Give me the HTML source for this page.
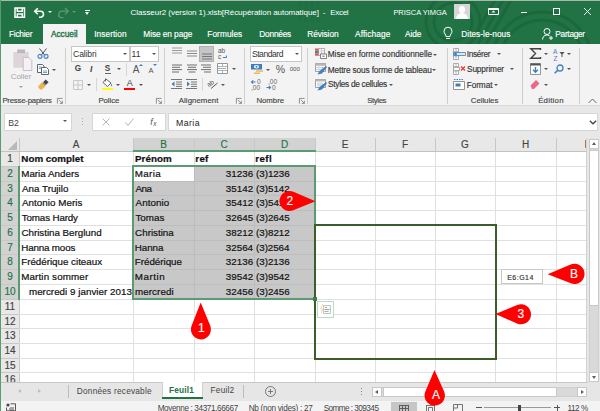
<!DOCTYPE html>
<html><head><meta charset="utf-8">
<style>
*{margin:0;padding:0;box-sizing:border-box}
html,body{width:600px;height:411px;overflow:hidden;background:#fff;font-family:"Liberation Sans",sans-serif}
.a{position:absolute}
.t{position:absolute;white-space:nowrap;line-height:1}
.c{-webkit-text-stroke:0.2px currentColor}
.c1{-webkit-text-stroke:0.15px currentColor}
.c2{-webkit-text-stroke:0.35px currentColor}
svg{position:absolute;overflow:visible}
.tab{position:absolute;white-space:nowrap;line-height:1;font-size:8.5px;color:#fff;top:31px}
.gl{position:absolute;white-space:nowrap;line-height:1;font-size:8px;color:#444;top:96px}
.sep{position:absolute;width:1px;background:#d6d6d6;top:48px;height:56px}
.rt{position:absolute;font-size:9px;color:#262626;white-space:nowrap;line-height:1}
.dd{position:absolute;width:0;height:0;border-left:2px solid transparent;border-right:2px solid transparent;border-top:2px solid #555}
</style></head><body>
<div class="a" style="left:0;top:0;width:600px;height:44px;background:#217346"></div>
<svg style="left:280px;top:0" width="320" height="44" viewBox="0 0 320 44"><g fill="none" stroke="#1c683d" stroke-width="3"><circle cx="173" cy="22" r="19"/><circle cx="173" cy="22" r="27"/><path d="M190 44L215 0M198 44L223 0M206 44L231 0"/><circle cx="262" cy="62" r="42"/><circle cx="262" cy="62" r="50"/><path d="M20 0v22M26 0v22M32 0v22M38 0v22" stroke="#1f6f43"/></g></svg>
<div class="a" style="left:0;top:0;width:600px;height:1px;background:#a8b8ac"></div>
<!-- QAT -->
<svg style="left:14px;top:7px" width="12" height="11" viewBox="0 0 12 11"><g fill="none" stroke="#fff" stroke-width="1.5"><path d="M1 .9h9.5v9.3H1z"/><path d="M3.3 .9v3.3h5V.9"/><path d="M3.3 10.2V7h5v3.2"/></g></svg>
<svg style="left:33px;top:7px" width="13" height="11" viewBox="0 0 13 11"><g fill="none" stroke="#fff" stroke-width="1.6"><path d="M1.8 4.2h5.7a3 3 0 0 1 0 6H6"/><path d="M4.8 1.2L1.8 4.2l3 3"/></g></svg>
<div class="a" style="left:48px;top:11px;border-left:2px solid transparent;border-right:2px solid transparent;border-top:2.5px solid #fff"></div>
<svg style="left:57px;top:7px" width="13" height="11" viewBox="0 0 13 11"><g fill="none" stroke="#5e9a77" stroke-width="1.3"><path d="M11 4.2H5a3.2 3.2 0 0 0 0 6.4h1.5"/><path d="M8 1l3.2 3.2L8 7.4"/></g></svg>
<div class="a" style="left:72px;top:11px;border-left:2px solid transparent;border-right:2px solid transparent;border-top:2.5px solid #5e9a77"></div>
<div class="a" style="left:85px;top:10px;width:5px;height:1px;background:#fff"></div>
<div class="a" style="left:85px;top:12px;border-left:2.5px solid transparent;border-right:2.5px solid transparent;border-top:3px solid #fff"></div>
<!-- title -->
<div class="a" style="left:454px;top:4px;width:16px;height:15px;background:#d6d6d6;overflow:hidden"><div class="a" style="left:5px;top:2px;width:6px;height:7px;border-radius:3px;background:#fff"></div><div class="a" style="left:2px;top:9px;width:12px;height:9px;border-radius:6px 6px 0 0;background:#fff"></div></div>
<svg style="left:488px;top:8px" width="11" height="7" viewBox="0 0 11 7"><path d="M.5 .5h10v6h-10z" fill="none" stroke="#fff" stroke-width="1"/><path d="M3.5 4.5l2-2 2 2z" fill="#fff"/><path d="M.5 1.5h10" stroke="#fff" stroke-width="1"/></svg>
<div class="a" style="left:521px;top:12px;width:6px;height:1px;background:#fff"></div>
<div class="a" style="left:553px;top:8px;width:7px;height:7px;border:1px solid #fff"></div>
<svg style="left:584px;top:8px" width="7" height="7" viewBox="0 0 7 7"><path d="M0 0l7 7M7 0L0 7" stroke="#fff" stroke-width="0.9"/></svg>
<!-- tabs -->
<div class="a" style="left:43px;top:24px;width:43px;height:21px;background:#f3f3f3"></div>
<svg style="left:443px;top:27px" width="10" height="13" viewBox="0 0 10 13"><g fill="none" stroke="#fff" stroke-width="1"><path d="M3 9.5C3 7.5 1 6.5 1 4.2a4 4 0 0 1 8 0C9 6.5 7 7.5 7 9.5z"/><path d="M3.2 11.5h3.6"/></g></svg>
<svg style="left:542px;top:28px" width="12" height="12" viewBox="0 0 12 12"><g fill="none" stroke="#fff" stroke-width="1"><circle cx="5" cy="3.5" r="3"/><path d="M.5 11.5a4.5 4.5 0 0 1 7-3.8"/><path d="M9 8v4M7 10h4"/></g></svg>

<div class="t" style="left:130.60px;top:8.83px;font-size:8.0px;color:#fff;letter-spacing:-0.047px">Classeur2 (version 1).xlsb[Récupération automatique]</div>
<div class="t" style="left:322.64px;top:8.83px;font-size:8.0px;color:#fff">-</div>
<div class="t" style="left:330.36px;top:8.83px;font-size:8.0px;color:#fff;letter-spacing:-0.350px">Excel</div>
<div class="t" style="left:393.40px;top:9.25px;font-size:7.5px;color:#fff;letter-spacing:-0.030px">PRISCA YIMGA</div>
<div class="t c1" style="left:9.04px;top:29.67px;font-size:8.3px;color:#fff;letter-spacing:-0.252px">Fichier</div>
<div class="t c2" style="left:51.00px;top:29.67px;font-size:8.3px;color:#217346;letter-spacing:-0.031px">Accueil</div>
<div class="t c1" style="left:94.25px;top:29.67px;font-size:8.3px;color:#fff;letter-spacing:0.057px">Insertion</div>
<div class="t c1" style="left:143.34px;top:29.67px;font-size:8.3px;color:#fff;letter-spacing:-0.073px">Mise en page</div>
<div class="t c1" style="left:207.34px;top:29.67px;font-size:8.3px;color:#fff;letter-spacing:0.049px">Formules</div>
<div class="t c1" style="left:259.34px;top:29.67px;font-size:8.3px;color:#fff;letter-spacing:-0.214px">Données</div>
<div class="t c1" style="left:307.34px;top:29.67px;font-size:8.3px;color:#fff;letter-spacing:-0.090px">Révision</div>
<div class="t c1" style="left:355.00px;top:29.67px;font-size:8.3px;color:#fff;letter-spacing:0.116px">Affichage</div>
<div class="t c1" style="left:405.00px;top:29.67px;font-size:8.3px;color:#fff;letter-spacing:-0.076px">Aide</div>
<div class="t c1" style="left:461.34px;top:29.67px;font-size:8.3px;color:#fff;letter-spacing:0.006px">Dites-le-nous</div>
<div class="t c1" style="left:555.34px;top:29.67px;font-size:8.3px;color:#fff;letter-spacing:-0.292px">Partager</div>
<div class="a" style="left:0;top:44px;width:600px;height:62px;background:#f3f3f3"></div>
<div class="a" style="left:0;top:105px;width:600px;height:1px;background:#dadada"></div>
<div class="a" style="left:0;top:106px;width:600px;height:32px;background:#e8e8e8"></div>
<!-- separators -->
<div class="a" style="left:65px;top:48px;width:1px;height:56px;background:#cdcdcd"></div>
<div class="a" style="left:164px;top:48px;width:1px;height:56px;background:#cdcdcd"></div>
<div class="a" style="left:244px;top:48px;width:1px;height:56px;background:#cdcdcd"></div>
<div class="a" style="left:307px;top:48px;width:1px;height:56px;background:#cdcdcd"></div>
<div class="a" style="left:447px;top:48px;width:1px;height:56px;background:#cdcdcd"></div>
<div class="a" style="left:522px;top:48px;width:1px;height:56px;background:#cdcdcd"></div>
<div class="a" style="left:579px;top:48px;width:1px;height:56px;background:#cdcdcd"></div>
<!-- small seps -->
<div class="a" style="left:126px;top:63px;width:1px;height:13px;background:#d6d6d6"></div>
<div class="a" style="left:96px;top:78px;width:1px;height:13px;background:#d6d6d6"></div>
<div class="a" style="left:202px;top:78px;width:1px;height:13px;background:#d6d6d6"></div>

<!-- Clipboard -->
<svg style="left:13px;top:49px" width="20" height="22" viewBox="0 0 20 22"><path d="M.3 3h15.4v15.7H.3z" fill="#dcd6d9"/><path d="M4.2 .5h7.8v3.6H4.2z" fill="#bdb5b9"/><path d="M10.2 8.4h5.6l3 3v10.1h-8.6z" fill="#f6f0f6" stroke="#bbb3b9" stroke-width=".8"/></svg>
<div class="dd" style="left:19px;top:86px;border-top-color:#a0a0a0"></div>
<svg style="left:37px;top:48px" width="12" height="11" viewBox="0 0 12 11"><g fill="none" stroke="#4e4e4e" stroke-width="1"><path d="M2.5 .5l5.5 7M9.5 .5L4 7.5"/></g><g fill="none" stroke="#4a88c8" stroke-width="1.2"><circle cx="3" cy="8.3" r="2"/><circle cx="9" cy="8.3" r="2"/></g></svg>
<svg style="left:37px;top:64px" width="12" height="11" viewBox="0 0 12 11"><path d="M.5 .5h5l1.5 1.5v6.5H.5z" fill="#fff" stroke="#555" stroke-width=".9"/><path d="M4.5 3.5h5l2 2v5h-7z" fill="#fff" stroke="#555" stroke-width=".9"/><path d="M6 7h4M6 8.5h4" stroke="#4a88c8" stroke-width=".8"/><path d="M1.8 3h3M1.8 4.5h2" stroke="#4a88c8" stroke-width=".8"/></svg>
<div class="dd" style="left:52px;top:69px"></div>
<svg style="left:38px;top:79px" width="11" height="11" viewBox="0 0 11 11"><path d="M3.8 3.6l3.6 3.6-3.4 3.4H2.2L.4 8.8V7z" fill="#f0b24a"/><path d="M5.2 3l2.6-2.6 2.8 2.8L8 5.8z" fill="#444"/><path d="M4.3 4l1-1 2.8 2.8-1 1z" fill="#777"/></svg>

<!-- Font -->
<div class="a" style="left:71px;top:46px;width:59px;height:16px;background:#fff;border:1px solid #c6c6c6"></div>
<div class="a" style="left:130px;top:46px;width:29px;height:16px;background:#fff;border:1px solid #c6c6c6"></div>
<div class="dd" style="left:123px;top:53px;border-left-width:2.5px;border-right-width:2.5px;border-top-width:2.5px"></div>
<div class="dd" style="left:152px;top:53px;border-left-width:2.5px;border-right-width:2.5px;border-top-width:2.5px"></div>
<div class="dd" style="left:117px;top:68px;border-left-width:2.5px;border-right-width:2.5px;border-top-width:2.5px"></div>
<div class="a" style="left:105px;top:73px;width:6px;height:1px;background:#666"></div>
<div class="a" style="left:139px;top:64px;border-left:2px solid transparent;border-right:2px solid transparent;border-bottom:2px solid #3f7fc0"></div>
<div class="a" style="left:153px;top:64px;border-left:2px solid transparent;border-right:2px solid transparent;border-top:2px solid #3f7fc0"></div>
<svg style="left:73px;top:80px" width="10" height="10" viewBox="0 0 10 10"><g fill="none" stroke="#c8c8c8" stroke-width="1"><path d="M.5 .5h9v9h-9zM5 .5v9M.5 5h9"/></g></svg>
<div class="dd" style="left:87px;top:84px;border-left-width:2.5px;border-right-width:2.5px;border-top-width:2.5px"></div>
<svg style="left:102px;top:78px" width="12" height="10" viewBox="0 0 12 10"><path d="M4 1l5 4-3.5 3.5-4.5-4z" fill="#fff" stroke="#555" stroke-width=".9"/><path d="M9.5 5.5q1.5 2 0 3q-1.2-1 0-3z" fill="#3f7fc0"/><path d="M3.5 .5v3" stroke="#555" stroke-width=".9"/></svg>
<div class="a" style="left:102px;top:88px;width:11px;height:2px;background:#ffff00"></div>
<div class="dd" style="left:116px;top:84px;border-left-width:2.5px;border-right-width:2.5px;border-top-width:2.5px"></div>
<div class="a" style="left:124px;top:88px;width:11px;height:2px;background:#ff0000"></div>
<div class="dd" style="left:139px;top:84px;border-left-width:2.5px;border-right-width:2.5px;border-top-width:2.5px"></div>
<svg style="left:156px;top:98px" width="6" height="6" viewBox="0 0 6 6"><g fill="none" stroke="#777" stroke-width=".8"><path d="M.4 5.6V.4h5.2"/><path d="M1.8 1.8l3.5 3.5M5.4 2.8v2.6H2.8"/></g></svg>
<svg style="left:57px;top:98px" width="6" height="6" viewBox="0 0 6 6"><g fill="none" stroke="#777" stroke-width=".8"><path d="M.4 5.6V.4h5.2"/><path d="M1.8 1.8l3.5 3.5M5.4 2.8v2.6H2.8"/></g></svg>
<svg style="left:236px;top:98px" width="6" height="6" viewBox="0 0 6 6"><g fill="none" stroke="#777" stroke-width=".8"><path d="M.4 5.6V.4h5.2"/><path d="M1.8 1.8l3.5 3.5M5.4 2.8v2.6H2.8"/></g></svg>
<svg style="left:299px;top:98px" width="6" height="6" viewBox="0 0 6 6"><g fill="none" stroke="#777" stroke-width=".8"><path d="M.4 5.6V.4h5.2"/><path d="M1.8 1.8l3.5 3.5M5.4 2.8v2.6H2.8"/></g></svg>

<!-- Alignment -->
<svg style="left:172px;top:47px" width="10" height="7" viewBox="0 0 10 7"><path d="M0 1h10M0 3.5h10M0 6h10" stroke="#9a9a9a" stroke-width="1"/></svg>
<svg style="left:187px;top:50px" width="10" height="7" viewBox="0 0 10 7"><path d="M0 1h10M0 3.5h10M0 6h10" stroke="#8a8a8a" stroke-width="1"/></svg>
<div class="a" style="left:199px;top:46px;width:15px;height:16px;background:#c6c6c6;border:1px solid #b0b0b0"></div>
<svg style="left:202px;top:53px" width="10" height="7" viewBox="0 0 10 7"><path d="M0 1h10M0 3.5h10M0 6h10" stroke="#777" stroke-width="1"/></svg>
<svg style="left:172px;top:64px" width="10" height="9" viewBox="0 0 10 9"><path d="M0 1h10M0 3.3h8M0 5.6h10M0 8h7" stroke="#707070" stroke-width="1"/></svg>
<svg style="left:187px;top:64px" width="10" height="9" viewBox="0 0 10 9"><path d="M0 1h10M1 3.3h8M0 5.6h10M1.5 8h7" stroke="#707070" stroke-width="1"/></svg>
<svg style="left:201px;top:64px" width="10" height="9" viewBox="0 0 10 9"><path d="M0 1h10M2 3.3h8M0 5.6h10M3 8h7" stroke="#707070" stroke-width="1"/></svg>
<svg style="left:218px;top:48px" width="10" height="11" viewBox="0 0 10 11"><text x="0" y="5" font-family="Liberation Sans" font-size="6.5" fill="#555">ab</text><text x="0" y="10.5" font-family="Liberation Sans" font-size="6.5" fill="#555">c</text><path d="M5 9.5h3.5v-2" fill="none" stroke="#3f7fc0" stroke-width="1"/></svg>
<svg style="left:217px;top:63px" width="11" height="11" viewBox="0 0 11 11"><path d="M.5 .5h10v10h-10z" fill="#fff" stroke="#8a8a8a" stroke-width=".9"/><path d="M.5 3.5h10M.5 7.5h10M5.5 .5v3M5.5 7.5v3" stroke="#a0a0a0" stroke-width=".8"/><path d="M1.5 5.5h8" stroke="#3f7fc0" stroke-width="1" stroke-dasharray="1.2 .8"/></svg>
<div class="dd" style="left:232px;top:68px;border-left-width:2.5px;border-right-width:2.5px;border-top-width:2.5px"></div>
<svg style="left:171px;top:79px" width="11" height="10" viewBox="0 0 11 10"><path d="M0 .5h11M5 3h6M5 5.2h6M5 7.4h6M0 9.5h11" stroke="#777" stroke-width="1"/><path d="M.5 5l3-2.5v5z" fill="#3f7fc0"/></svg>
<svg style="left:186px;top:79px" width="11" height="10" viewBox="0 0 11 10"><path d="M0 .5h11M5 3h6M5 5.2h6M5 7.4h6M0 9.5h11" stroke="#777" stroke-width="1"/><path d="M4 5l-3-2.5v5z" fill="#3f7fc0"/></svg>
<svg style="left:207px;top:79px" width="12" height="10" viewBox="0 0 12 10"><text x="0" y="7" font-family="Liberation Sans" font-size="6.5" fill="#555" transform="rotate(-35 3 5)">ab</text><path d="M4 9.5l6.5-5.5" stroke="#555" stroke-width="1"/></svg>
<div class="dd" style="left:221px;top:84px;border-left-width:2.5px;border-right-width:2.5px;border-top-width:2.5px"></div>

<!-- Number -->
<div class="a" style="left:250px;top:46px;width:52px;height:16px;background:#fff;border:1px solid #c6c6c6"></div>
<div class="dd" style="left:295px;top:53px;border-left-width:2.5px;border-right-width:2.5px;border-top-width:2.5px"></div>
<svg style="left:251px;top:64px" width="13" height="10" viewBox="0 0 13 10"><path d="M0 0h11v5.5H0z" fill="#3f7fc0"/><ellipse cx="5.5" cy="2.75" rx="2.6" ry="1.7" fill="#fff"/><circle cx="5.5" cy="2.75" r="1" fill="#3f7fc0"/><path d="M5 6.3h7v1.5H5zM3 8.4h6v1.5H3z" fill="#f2b54f"/></svg>
<div class="dd" style="left:266px;top:69px;border-left-width:2.5px;border-right-width:2.5px;border-top-width:2.5px"></div>
<svg style="left:251px;top:79px" width="12" height="11" viewBox="0 0 12 11"><path d="M.5 3h4M2.2 1.3L.5 3l1.7 1.7" fill="none" stroke="#3f7fc0" stroke-width="1.1"/><text x="6" y="5" font-family="Liberation Sans" font-size="6.5" fill="#666">0</text><text x="0" y="11" font-family="Liberation Sans" font-size="6.5" fill="#666">,00</text></svg>
<svg style="left:266px;top:79px" width="12" height="11" viewBox="0 0 12 11"><text x="2" y="5" font-family="Liberation Sans" font-size="6.5" fill="#666">,00</text><path d="M.5 8.5h4M2.8 6.8l1.7 1.7-1.7 1.7" fill="none" stroke="#3f7fc0" stroke-width="1.1"/><text x="6" y="11" font-family="Liberation Sans" font-size="6.5" fill="#666">0</text></svg>

<!-- Styles icons -->
<svg style="left:315px;top:48px" width="12" height="11" viewBox="0 0 12 11"><path d="M3.5 .5h6v7h-6z" fill="#fff" stroke="#999" stroke-width=".8"/><path d="M3.5 2.8h6M3.5 5.2h6M6.5 .5v7" stroke="#bbb" stroke-width=".7"/><path d="M0 .5h3.5v2.3H0z" fill="#e8553a"/><path d="M0 3h3.5v2.3H0z" fill="#3f7fc0"/><path d="M0 5.4h3.5v2.3H0z" fill="#e8553a"/><path d="M5.5 6h6v4.5h-6z" fill="#fff" stroke="#666" stroke-width=".8"/><path d="M7.5 8.2l2 0" stroke="#555" stroke-width="1"/></svg>
<svg style="left:315px;top:63px" width="12" height="12" viewBox="0 0 12 12"><path d="M.5 .5h10v8h-10z" fill="#fff" stroke="#888" stroke-width=".8"/><path d="M.5 2.5h10M.5 4.5h10M.5 6.5h10M3.8 .5v8M7.2 .5v8" stroke="#bbb" stroke-width=".6"/><path d="M.5 .5h10v2h-10z" fill="#b8b8b8"/><path d="M2.5 11.5l2-3.5 6.5-5 1 1-5 6.5z" fill="#3f7fc0"/></svg>
<svg style="left:315px;top:79px" width="12" height="12" viewBox="0 0 12 12"><path d="M.5 .5h10v8h-10z" fill="#fff" stroke="#888" stroke-width=".8"/><path d="M.5 .5h10v2h-10z" fill="#b8b8b8"/><path d="M2 3.5h6v4H2z" fill="#dcdcdc"/><path d="M2.5 11.5l2-3.5 6.5-5 1 1-5 6.5z" fill="#3f7fc0"/></svg>
<div class="dd" style="left:433px;top:54px"></div>
<div class="dd" style="left:432px;top:69px"></div>
<div class="dd" style="left:389px;top:84px"></div>

<!-- Cells icons -->
<svg style="left:453px;top:48px" width="13" height="12" viewBox="0 0 13 12"><path d="M.5 .5h5v11h-5z" fill="#fff" stroke="#999" stroke-width=".8"/><path d="M.5 3.5h5M.5 8h5M3 .5v3M3 8v3.5" stroke="#999" stroke-width=".7"/><path d="M.5 4.5h12v3h-12z" fill="#dbe7f5" stroke="#3f7fc0" stroke-width=".8"/><circle cx="2.5" cy="6" r="1.4" fill="#3f7fc0"/></svg>
<div class="dd" style="left:497px;top:53px;border-left-width:2.5px;border-right-width:2.5px;border-top-width:2.5px"></div>
<svg style="left:453px;top:63px" width="13" height="12" viewBox="0 0 13 12"><path d="M.5 .5h5v11h-5z" fill="#fff" stroke="#999" stroke-width=".8"/><path d="M.5 3.5h5M.5 8h5M3 .5v3M3 8v3.5" stroke="#999" stroke-width=".7"/><path d="M.5 4.5h6v3h-6z" fill="#fff" stroke="#999" stroke-width=".8"/><path d="M8 3.5l4 4M12 3.5l-4 4" stroke="#e03a2a" stroke-width="1.2"/></svg>
<div class="dd" style="left:510px;top:68px;border-left-width:2.5px;border-right-width:2.5px;border-top-width:2.5px"></div>
<svg style="left:453px;top:78px" width="13" height="12" viewBox="0 0 13 12"><path d="M1 1.5h10" stroke="#3f7fc0" stroke-width="1" stroke-dasharray="1.5 1"/><path d="M.5 3.5h11v8h-11z" fill="#fff" stroke="#888" stroke-width=".9"/><path d="M2.5 5.5h5v3h-5z" fill="#3f7fc0"/></svg>
<div class="dd" style="left:494px;top:84px"></div>

<!-- Editing -->
<svg style="left:530px;top:48px" width="11" height="11" viewBox="0 0 11 11"><path d="M10.5 2V.8H.8l4.7 4.7L.8 10.2h9.7V9" fill="none" stroke="#444" stroke-width="1.4"/></svg>
<div class="dd" style="left:544px;top:53px;border-left-width:2.5px;border-right-width:2.5px;border-top-width:2.5px"></div>
<svg style="left:553px;top:47px" width="12" height="15" viewBox="0 0 12 15"><text x="0" y="7" font-family="Liberation Sans" font-size="6.5" fill="#3f7fc0">A</text><text x="0.5" y="13.5" font-family="Liberation Sans" font-size="6.5" fill="#8e5bbf">Z</text><path d="M6.5 5h5l-2 2.5V10h-1V7.5z" fill="#555"/></svg>
<div class="dd" style="left:567px;top:53px;border-left-width:2.5px;border-right-width:2.5px;border-top-width:2.5px"></div>
<svg style="left:530px;top:63px" width="11" height="12" viewBox="0 0 11 12"><path d="M.5 .5h10v11h-10z" fill="#fff" stroke="#888" stroke-width=".9"/><path d="M.5 .5h10v2h-10z" fill="#555"/><path d="M5.5 4v5M3 6.8l2.5 2.5 2.5-2.5" fill="none" stroke="#3f7fc0" stroke-width="1.4"/></svg>
<div class="dd" style="left:544px;top:68px;border-left-width:2.5px;border-right-width:2.5px;border-top-width:2.5px"></div>
<svg style="left:554px;top:64px" width="10" height="10" viewBox="0 0 10 10"><circle cx="6" cy="4" r="3" fill="none" stroke="#3f7fc0" stroke-width="1.3"/><path d="M4 6l-3.3 3.3" stroke="#3f7fc0" stroke-width="1.6"/></svg>
<div class="dd" style="left:567px;top:68px;border-left-width:2.5px;border-right-width:2.5px;border-top-width:2.5px"></div>
<svg style="left:530px;top:79px" width="10" height="10" viewBox="0 0 10 10"><path d="M.5 6.5l5.5-5.5 3.5 3.5-5.5 5.5H2z" fill="#ea6a86"/></svg>
<div class="dd" style="left:544px;top:84px;border-left-width:2.5px;border-right-width:2.5px;border-top-width:2.5px"></div>
<svg style="left:588px;top:98px" width="9" height="6" viewBox="0 0 9 6"><path d="M.5 5l4-4 4 4" fill="none" stroke="#666" stroke-width="1"/></svg>
<!-- formula bar -->
<div class="a" style="left:4px;top:113px;width:68px;height:18px;background:#fff;border:1px solid #d6d6d6"></div>
<div class="dd" style="left:63px;top:120px;border-left-width:2.5px;border-right-width:2.5px;border-top-width:2.5px"></div>
<div class="a" style="left:82px;top:118px;width:1px;height:1px;background:#aaa"></div>
<div class="a" style="left:82px;top:121px;width:1px;height:1px;background:#aaa"></div>
<div class="a" style="left:82px;top:124px;width:1px;height:1px;background:#aaa"></div>
<div class="a" style="left:92px;top:113px;width:74px;height:18px;background:#fff;border:1px solid #d6d6d6"></div>
<svg style="left:102px;top:118px" width="8" height="8" viewBox="0 0 8 8"><path d="M.5 .5l7 7M7.5 .5l-7 7" stroke="#b4b4b4" stroke-width="1"/></svg>
<svg style="left:125px;top:118px" width="9" height="8" viewBox="0 0 9 8"><path d="M.5 4.5l2.5 3 5.5-7" fill="none" stroke="#b4b4b4" stroke-width="1"/></svg>
<div class="a" style="left:168px;top:113px;width:430px;height:18px;background:#fff;border:1px solid #d6d6d6"></div>
<svg style="left:589px;top:119.5px" width="8" height="5" viewBox="0 0 8 5"><path d="M.8 .8l3.2 3 3.2-3" fill="none" stroke="#444" stroke-width="1.3"/></svg>

<div class="t c1" style="left:2.38px;top:97.10px;font-size:7.8px;color:#444;letter-spacing:-0.216px">Presse-papiers</div>
<div class="t c1" style="left:98.38px;top:97.10px;font-size:7.8px;color:#444;letter-spacing:-0.056px">Police</div>
<div class="t c1" style="left:178.80px;top:97.10px;font-size:7.8px;color:#444;letter-spacing:0.060px">Alignement</div>
<div class="t c1" style="left:256.38px;top:97.10px;font-size:7.8px;color:#444">Nombre</div>
<div class="t c1" style="left:367.15px;top:97.10px;font-size:7.8px;color:#444;letter-spacing:-0.376px">Styles</div>
<div class="t c1" style="left:470.86px;top:97.10px;font-size:7.8px;color:#444;letter-spacing:-0.045px">Cellules</div>
<div class="t c1" style="left:538.13px;top:97.10px;font-size:7.8px;color:#444;letter-spacing:0.259px">Édition</div>
<div class="t" style="left:10.70px;top:73.13px;font-size:8px;color:#a6a6a6;letter-spacing:-0.052px">Coller</div>
<div class="t" style="left:73.07px;top:49.72px;font-size:8.6px;color:#333;letter-spacing:-0.141px">Calibri</div>
<div class="t" style="left:131.55px;top:49.72px;font-size:8.6px;color:#333">11</div>
<div class="t" style="left:251.91px;top:49.52px;font-size:8.6px;color:#333;letter-spacing:-0.467px">Standard</div>
<div class="t" style="left:74.87px;top:65.26px;font-size:8.2px;color:#444;font-weight:bold">G</div>
<div class="t" style="left:89.94px;top:64.92px;font-size:8.6px;color:#444;font-weight:bold;font-style:italic;font-family:"Liberation Serif",serif">I</div>
<div class="t" style="left:104.75px;top:65.26px;font-size:8.2px;color:#444;font-weight:bold">S</div>
<div class="t" style="left:132.70px;top:64.73px;font-size:10px;color:#555">A</div>
<div class="t" style="left:148.50px;top:66.65px;font-size:7.5px;color:#555">A</div>
<div class="t" style="left:126.80px;top:78.88px;font-size:9px;color:#444">A</div>
<div class="t" style="left:275.63px;top:64.31px;font-size:10.5px;color:#555">%</div>
<div class="t" style="left:289.75px;top:66.15px;font-size:6.2px;color:#555;letter-spacing:-0.079px">000</div>
<div class="t c1" style="left:327.74px;top:50.37px;font-size:8.3px;color:#333;letter-spacing:-0.045px">Mise en forme conditionnelle</div>
<div class="t c1" style="left:327.74px;top:65.77px;font-size:8.3px;color:#333;letter-spacing:-0.142px">Mettre sous forme de tableau</div>
<div class="t c1" style="left:328.03px;top:80.27px;font-size:8.3px;color:#333;letter-spacing:-0.285px">Styles de cellules</div>
<div class="t c1" style="left:466.65px;top:49.87px;font-size:8.3px;color:#333;letter-spacing:-0.307px">Insérer</div>
<div class="t c1" style="left:467.03px;top:65.07px;font-size:8.3px;color:#333;letter-spacing:-0.146px">Supprimer</div>
<div class="t c1" style="left:466.74px;top:80.72px;font-size:8.3px;color:#333;letter-spacing:-0.113px">Format</div>
<div class="t" style="left:8.30px;top:118.64px;font-size:8.7px;color:#444;letter-spacing:0.017px">B2</div>
<div class="t" style="left:176.00px;top:118.64px;font-size:8.7px;color:#222;letter-spacing:0.437px">Maria</div>
<div class="t" style="left:150.37px;top:117.88px;font-size:9px;color:#555;font-style:italic;font-family:"Liberation Serif",serif">f</div>
<div class="t" style="left:153.13px;top:121.00px;font-size:6.5px;color:#555;font-style:italic;font-family:"Liberation Serif",serif">x</div>
<div class="a" style="left:1px;top:138px;width:586px;height:244px;background:#fff"></div>
<div class="a" style="left:1px;top:138px;width:586px;height:13px;background:#e8e8e8"></div>
<div class="a" style="left:1px;top:151px;width:18px;height:231px;background:#e8e8e8"></div>
<div class="a" style="left:133px;top:138px;width:182px;height:13px;background:#d2d2d2"></div>
<div class="a" style="left:1px;top:166px;width:18px;height:133px;background:#d2d2d2"></div>
<div class="a" style="left:133px;top:166px;width:182px;height:133px;background:#c8c8c8"></div>
<div class="a" style="left:134px;top:167px;width:60px;height:14px;background:#fff"></div>
<div class="a" style="left:19px;top:138px;width:1px;height:244px;background:#c8c8c8"></div>
<div class="a" style="left:133px;top:151px;width:1px;height:231px;background:#e0e0e0"></div>
<div class="a" style="left:133px;top:138px;width:1px;height:13px;background:#c8c8c8"></div>
<div class="a" style="left:194px;top:151px;width:1px;height:231px;background:#e0e0e0"></div>
<div class="a" style="left:194px;top:138px;width:1px;height:13px;background:#c8c8c8"></div>
<div class="a" style="left:254px;top:151px;width:1px;height:231px;background:#e0e0e0"></div>
<div class="a" style="left:254px;top:138px;width:1px;height:13px;background:#c8c8c8"></div>
<div class="a" style="left:315px;top:151px;width:1px;height:231px;background:#e0e0e0"></div>
<div class="a" style="left:315px;top:138px;width:1px;height:13px;background:#c8c8c8"></div>
<div class="a" style="left:375px;top:151px;width:1px;height:231px;background:#e0e0e0"></div>
<div class="a" style="left:375px;top:138px;width:1px;height:13px;background:#c8c8c8"></div>
<div class="a" style="left:435px;top:151px;width:1px;height:231px;background:#e0e0e0"></div>
<div class="a" style="left:435px;top:138px;width:1px;height:13px;background:#c8c8c8"></div>
<div class="a" style="left:495px;top:151px;width:1px;height:231px;background:#e0e0e0"></div>
<div class="a" style="left:495px;top:138px;width:1px;height:13px;background:#c8c8c8"></div>
<div class="a" style="left:556px;top:151px;width:1px;height:231px;background:#e0e0e0"></div>
<div class="a" style="left:556px;top:138px;width:1px;height:13px;background:#c8c8c8"></div>
<div class="a" style="left:1px;top:151px;width:585px;height:1px;background:#c2c2c2"></div>
<div class="a" style="left:19px;top:166px;width:567px;height:1px;background:#e0e0e0"></div>
<div class="a" style="left:1px;top:166px;width:18px;height:1px;background:#c8c8c8"></div>
<div class="a" style="left:19px;top:181px;width:567px;height:1px;background:#e0e0e0"></div>
<div class="a" style="left:1px;top:181px;width:18px;height:1px;background:#c8c8c8"></div>
<div class="a" style="left:19px;top:195px;width:567px;height:1px;background:#e0e0e0"></div>
<div class="a" style="left:1px;top:195px;width:18px;height:1px;background:#c8c8c8"></div>
<div class="a" style="left:19px;top:210px;width:567px;height:1px;background:#e0e0e0"></div>
<div class="a" style="left:1px;top:210px;width:18px;height:1px;background:#c8c8c8"></div>
<div class="a" style="left:19px;top:225px;width:567px;height:1px;background:#e0e0e0"></div>
<div class="a" style="left:1px;top:225px;width:18px;height:1px;background:#c8c8c8"></div>
<div class="a" style="left:19px;top:240px;width:567px;height:1px;background:#e0e0e0"></div>
<div class="a" style="left:1px;top:240px;width:18px;height:1px;background:#c8c8c8"></div>
<div class="a" style="left:19px;top:254px;width:567px;height:1px;background:#e0e0e0"></div>
<div class="a" style="left:1px;top:254px;width:18px;height:1px;background:#c8c8c8"></div>
<div class="a" style="left:19px;top:269px;width:567px;height:1px;background:#e0e0e0"></div>
<div class="a" style="left:1px;top:269px;width:18px;height:1px;background:#c8c8c8"></div>
<div class="a" style="left:19px;top:284px;width:567px;height:1px;background:#e0e0e0"></div>
<div class="a" style="left:1px;top:284px;width:18px;height:1px;background:#c8c8c8"></div>
<div class="a" style="left:19px;top:299px;width:567px;height:1px;background:#e0e0e0"></div>
<div class="a" style="left:1px;top:299px;width:18px;height:1px;background:#c8c8c8"></div>
<div class="a" style="left:19px;top:314px;width:567px;height:1px;background:#e0e0e0"></div>
<div class="a" style="left:1px;top:314px;width:18px;height:1px;background:#c8c8c8"></div>
<div class="a" style="left:19px;top:328px;width:567px;height:1px;background:#e0e0e0"></div>
<div class="a" style="left:1px;top:328px;width:18px;height:1px;background:#c8c8c8"></div>
<div class="a" style="left:19px;top:343px;width:567px;height:1px;background:#e0e0e0"></div>
<div class="a" style="left:1px;top:343px;width:18px;height:1px;background:#c8c8c8"></div>
<div class="a" style="left:19px;top:358px;width:567px;height:1px;background:#e0e0e0"></div>
<div class="a" style="left:1px;top:358px;width:18px;height:1px;background:#c8c8c8"></div>
<div class="a" style="left:19px;top:372px;width:567px;height:1px;background:#e0e0e0"></div>
<div class="a" style="left:1px;top:372px;width:18px;height:1px;background:#c8c8c8"></div>
<div class="a" style="left:194px;top:166px;width:1px;height:133px;background:#bdbdbd"></div>
<div class="a" style="left:254px;top:166px;width:1px;height:133px;background:#bdbdbd"></div>
<div class="a" style="left:133px;top:181px;width:182px;height:1px;background:#bdbdbd"></div>
<div class="a" style="left:133px;top:195px;width:182px;height:1px;background:#bdbdbd"></div>
<div class="a" style="left:133px;top:210px;width:182px;height:1px;background:#bdbdbd"></div>
<div class="a" style="left:133px;top:225px;width:182px;height:1px;background:#bdbdbd"></div>
<div class="a" style="left:133px;top:240px;width:182px;height:1px;background:#bdbdbd"></div>
<div class="a" style="left:133px;top:254px;width:182px;height:1px;background:#bdbdbd"></div>
<div class="a" style="left:133px;top:269px;width:182px;height:1px;background:#bdbdbd"></div>
<div class="a" style="left:133px;top:284px;width:182px;height:1px;background:#bdbdbd"></div>
<div class="a" style="left:133px;top:150px;width:183px;height:2px;background:#5a9b74"></div>
<div class="a" style="left:18px;top:166px;width:2px;height:134px;background:#5a9b74"></div>
<svg style="left:7px;top:141px" width="10" height="9" viewBox="0 0 10 9"><path d="M10 0V9H1z" fill="#b9b9b9"/></svg>
<div class="t" style="left:19px;width:114px;top:139.84px;font-size:10px;text-align:center;color:#444;-webkit-text-stroke:0.15px #444">A</div>
<div class="t" style="left:133px;width:61px;top:139.84px;font-size:10px;text-align:center;color:#217346;-webkit-text-stroke:0.15px #217346">B</div>
<div class="t" style="left:194px;width:60px;top:139.84px;font-size:10px;text-align:center;color:#217346;-webkit-text-stroke:0.15px #217346">C</div>
<div class="t" style="left:254px;width:61px;top:139.84px;font-size:10px;text-align:center;color:#217346;-webkit-text-stroke:0.15px #217346">D</div>
<div class="t" style="left:315px;width:60px;top:139.84px;font-size:10px;text-align:center;color:#444;-webkit-text-stroke:0.15px #444">E</div>
<div class="t" style="left:375px;width:60px;top:139.84px;font-size:10px;text-align:center;color:#444;-webkit-text-stroke:0.15px #444">F</div>
<div class="t" style="left:435px;width:60px;top:139.84px;font-size:10px;text-align:center;color:#444;-webkit-text-stroke:0.15px #444">G</div>
<div class="t" style="left:495px;width:61px;top:139.84px;font-size:10px;text-align:center;color:#444;-webkit-text-stroke:0.15px #444">H</div>
<div class="t" style="left:556px;width:60px;top:139.84px;font-size:10px;text-align:center;color:#444;-webkit-text-stroke:0.15px #444">I</div>
<div class="t" style="left:1px;width:18px;top:153.53px;font-size:10px;text-align:center;color:#444;-webkit-text-stroke:0.15px #444">1</div>
<div class="t" style="left:1px;width:18px;top:168.53px;font-size:10px;text-align:center;color:#217346;-webkit-text-stroke:0.15px #217346">2</div>
<div class="t" style="left:1px;width:18px;top:183.53px;font-size:10px;text-align:center;color:#217346;-webkit-text-stroke:0.15px #217346">3</div>
<div class="t" style="left:1px;width:18px;top:197.53px;font-size:10px;text-align:center;color:#217346;-webkit-text-stroke:0.15px #217346">4</div>
<div class="t" style="left:1px;width:18px;top:212.53px;font-size:10px;text-align:center;color:#217346;-webkit-text-stroke:0.15px #217346">5</div>
<div class="t" style="left:1px;width:18px;top:227.53px;font-size:10px;text-align:center;color:#217346;-webkit-text-stroke:0.15px #217346">6</div>
<div class="t" style="left:1px;width:18px;top:242.53px;font-size:10px;text-align:center;color:#217346;-webkit-text-stroke:0.15px #217346">7</div>
<div class="t" style="left:1px;width:18px;top:256.54px;font-size:10px;text-align:center;color:#217346;-webkit-text-stroke:0.15px #217346">8</div>
<div class="t" style="left:1px;width:18px;top:271.54px;font-size:10px;text-align:center;color:#217346;-webkit-text-stroke:0.15px #217346">9</div>
<div class="t" style="left:1px;width:18px;top:286.54px;font-size:10px;text-align:center;color:#217346;-webkit-text-stroke:0.15px #217346">10</div>
<div class="t" style="left:1px;width:18px;top:301.54px;font-size:10px;text-align:center;color:#444;-webkit-text-stroke:0.15px #444">11</div>
<div class="t" style="left:1px;width:18px;top:316.54px;font-size:10px;text-align:center;color:#444;-webkit-text-stroke:0.15px #444">12</div>
<div class="t" style="left:1px;width:18px;top:330.54px;font-size:10px;text-align:center;color:#444;-webkit-text-stroke:0.15px #444">13</div>
<div class="t" style="left:1px;width:18px;top:345.54px;font-size:10px;text-align:center;color:#444;-webkit-text-stroke:0.15px #444">14</div>
<div class="t" style="left:1px;width:18px;top:360.54px;font-size:10px;text-align:center;color:#444;-webkit-text-stroke:0.15px #444">15</div>
<div class="t" style="left:1px;width:18px;top:374.54px;font-size:10px;text-align:center;color:#444;-webkit-text-stroke:0.15px #444">16</div>
<div class="t c" style="left:21.36px;top:154.40px;font-size:9.8px;color:#111;font-weight:bold">Nom complet</div>
<div class="t c" style="left:21.22px;top:169.40px;font-size:9.8px;color:#111;letter-spacing:0.010px">Maria Anders</div>
<div class="t c" style="left:22.00px;top:184.40px;font-size:9.8px;color:#111;letter-spacing:0.009px">Ana Trujilo</div>
<div class="t c" style="left:22.00px;top:198.40px;font-size:9.8px;color:#111;letter-spacing:0.035px">Antonio Meris</div>
<div class="t c" style="left:21.80px;top:213.40px;font-size:9.8px;color:#111;letter-spacing:-0.153px">Tomas Hardy</div>
<div class="t c" style="left:21.51px;top:228.40px;font-size:9.8px;color:#111;letter-spacing:-0.028px">Christina Berglund</div>
<div class="t c" style="left:21.22px;top:243.40px;font-size:9.8px;color:#111;letter-spacing:-0.160px">Hanna moos</div>
<div class="t c" style="left:21.22px;top:257.40px;font-size:9.8px;color:#111;letter-spacing:-0.018px">Frédérique citeaux</div>
<div class="t c" style="left:21.22px;top:272.40px;font-size:9.8px;color:#111;letter-spacing:0.135px">Martin sommer</div>
<div class="t c" style="left:28.96px;top:287.40px;font-size:9.8px;color:#111;letter-spacing:0.028px">mercredi 9 janvier 2013</div>
<div class="t c" style="left:134.96px;top:154.40px;font-size:9.8px;color:#111;letter-spacing:0.064px;font-weight:bold">Prénom</div>
<div class="t c" style="left:134.82px;top:169.40px;font-size:9.8px;color:#111;letter-spacing:0.346px">Maria</div>
<div class="t c" style="left:135.60px;top:184.40px;font-size:9.8px;color:#111;letter-spacing:-0.522px">Ana</div>
<div class="t c" style="left:135.60px;top:198.40px;font-size:9.8px;color:#111;letter-spacing:0.078px">Antonio</div>
<div class="t c" style="left:135.40px;top:213.40px;font-size:9.8px;color:#111;letter-spacing:0.020px">Tomas</div>
<div class="t c" style="left:135.11px;top:228.40px;font-size:9.8px;color:#111">Christina</div>
<div class="t c" style="left:134.82px;top:243.40px;font-size:9.8px;color:#111;letter-spacing:-0.069px">Hanna</div>
<div class="t c" style="left:134.82px;top:257.40px;font-size:9.8px;color:#111;letter-spacing:-0.029px">Frédérique</div>
<div class="t c" style="left:134.82px;top:272.40px;font-size:9.8px;color:#111;letter-spacing:0.525px">Martin</div>
<div class="t c" style="left:134.96px;top:287.40px;font-size:9.8px;color:#111;letter-spacing:0.079px">mercredi</div>
<div class="t c" style="left:195.36px;top:154.40px;font-size:9.8px;color:#111;letter-spacing:0.247px;font-weight:bold">ref</div>
<div class="t c" style="left:255.36px;top:154.40px;font-size:9.8px;color:#111;letter-spacing:0.345px;font-weight:bold">refl</div>
<div class="t c" style="left:225.81px;top:169.40px;font-size:9.8px;color:#111;letter-spacing:0.035px">31236</div>
<div class="t c" style="left:225.81px;top:184.40px;font-size:9.8px;color:#111;letter-spacing:0.060px">35142</div>
<div class="t c" style="left:225.81px;top:198.40px;font-size:9.8px;color:#111;letter-spacing:0.060px">35412</div>
<div class="t c" style="left:225.81px;top:213.40px;font-size:9.8px;color:#111;letter-spacing:0.035px">32645</div>
<div class="t c" style="left:225.81px;top:228.40px;font-size:9.8px;color:#111;letter-spacing:0.060px">38212</div>
<div class="t c" style="left:225.81px;top:243.40px;font-size:9.8px;color:#111">32564</div>
<div class="t c" style="left:225.81px;top:257.40px;font-size:9.8px;color:#111;letter-spacing:0.035px">32136</div>
<div class="t c" style="left:225.81px;top:272.40px;font-size:9.8px;color:#111;letter-spacing:0.060px">39542</div>
<div class="t c" style="left:225.81px;top:287.40px;font-size:9.8px;color:#111;letter-spacing:0.035px">32456</div>
<div class="t c" style="left:256.11px;top:169.40px;font-size:9.8px;color:#111;letter-spacing:-0.047px">(3)1236</div>
<div class="t c" style="left:256.11px;top:184.40px;font-size:9.8px;color:#111;letter-spacing:-0.030px">(3)5142</div>
<div class="t c" style="left:256.11px;top:198.40px;font-size:9.8px;color:#111;letter-spacing:-0.030px">(3)5412</div>
<div class="t c" style="left:256.11px;top:213.40px;font-size:9.8px;color:#111;letter-spacing:-0.047px">(3)2645</div>
<div class="t c" style="left:256.11px;top:228.40px;font-size:9.8px;color:#111;letter-spacing:-0.030px">(3)8212</div>
<div class="t c" style="left:256.11px;top:243.40px;font-size:9.8px;color:#111;letter-spacing:-0.071px">(3)2564</div>
<div class="t c" style="left:256.11px;top:257.40px;font-size:9.8px;color:#111;letter-spacing:-0.047px">(3)2136</div>
<div class="t c" style="left:256.11px;top:272.40px;font-size:9.8px;color:#111;letter-spacing:-0.030px">(3)9542</div>
<div class="t c" style="left:256.11px;top:287.40px;font-size:9.8px;color:#111;letter-spacing:-0.047px">(3)2456</div>
<div class="a" style="left:132px;top:165px;width:184px;height:135px;border:2px solid #5a9b74"></div>
<div class="a" style="left:314px;top:224px;width:183px;height:136px;border:2px solid #3b5d2a"></div>
<div class="a" style="left:313px;top:297px;width:4px;height:4px;background:#3f7a4f"></div>
<!-- vertical scrollbar -->
<div class="a" style="left:586px;top:138px;width:14px;height:244px;background:#e6e6e6"></div><div class="a" style="left:586px;top:138px;width:1px;height:244px;background:#d2d2d2"></div>
<div class="a" style="left:589px;top:139px;width:10px;height:243px;background:#d9d9d9;border:1px solid #cfcfcf"></div>
<div class="a" style="left:589px;top:139px;width:10px;height:10px;background:#fff;border:1px solid #c8c8c8"></div>
<div class="a" style="left:592px;top:142px;border-left:2.5px solid transparent;border-right:2.5px solid transparent;border-bottom:3px solid #606060"></div>
<div class="a" style="left:589px;top:150px;width:10px;height:156px;background:#fff;border:1px solid #c8c8c8"></div>
<div class="a" style="left:589px;top:372px;width:10px;height:10px;background:#fff;border:1px solid #c8c8c8"></div>
<div class="a" style="left:592px;top:376px;border-left:2.5px solid transparent;border-right:2.5px solid transparent;border-top:3px solid #606060"></div>
<!-- sheet tabs bar -->
<div class="a" style="left:0;top:382px;width:600px;height:19px;background:#e6e6e6"></div>
<div class="a" style="left:0;top:382px;width:588px;height:1px;background:#c8c8c8"></div>
<div class="a" style="left:18px;top:389px;border-top:2.5px solid transparent;border-bottom:2.5px solid transparent;border-right:3px solid #bdbdbd"></div>
<div class="a" style="left:38px;top:389px;border-top:2.5px solid transparent;border-bottom:2.5px solid transparent;border-left:3px solid #bdbdbd"></div>
<div class="a" style="left:68px;top:385px;width:1px;height:13px;background:#bdbdbd"></div>
<div class="a" style="left:162px;top:382px;width:41px;height:17px;background:#fff;border-left:1px solid #d0d0d0;border-right:1px solid #d0d0d0"></div>
<div class="a" style="left:162px;top:397px;width:41px;height:2px;background:#217346"></div>
<div class="a" style="left:243px;top:385px;width:1px;height:13px;background:#bdbdbd"></div>
<div class="a" style="left:265px;top:386px;width:11px;height:11px;border:1px solid #777;border-radius:50%"></div>
<div class="a" style="left:268px;top:391px;width:5px;height:1px;background:#777"></div>
<div class="a" style="left:270px;top:389px;width:1px;height:5px;background:#777"></div>
<div class="a" style="left:361px;top:388px;width:1px;height:1px;background:#888"></div>
<div class="a" style="left:361px;top:391px;width:1px;height:1px;background:#888"></div>
<div class="a" style="left:361px;top:394px;width:1px;height:1px;background:#888"></div>
<!-- h scrollbar -->
<div class="a" style="left:372px;top:387px;width:215px;height:10px;background:#d9d9d9;border:1px solid #cfcfcf"></div>
<div class="a" style="left:372px;top:387px;width:10px;height:10px;background:#fff;border:1px solid #c8c8c8"></div>
<div class="a" style="left:375px;top:389.5px;border-top:2.5px solid transparent;border-bottom:2.5px solid transparent;border-right:3px solid #606060"></div>
<div class="a" style="left:383px;top:387px;width:174px;height:10px;background:#fff;border:1px solid #c8c8c8"></div>
<div class="a" style="left:577px;top:387px;width:10px;height:10px;background:#fff;border:1px solid #c8c8c8"></div>
<div class="a" style="left:581px;top:389.5px;border-top:2.5px solid transparent;border-bottom:2.5px solid transparent;border-left:3px solid #606060"></div>
<!-- status bar -->
<div class="a" style="left:0;top:401px;width:600px;height:10px;background:#f3f3f3"></div>
<svg style="left:6px;top:403px" width="10" height="8" viewBox="0 0 10 8"><circle cx="2" cy="2" r="1.6" fill="#444"/><path d="M4.5 .8h5v7h-9V4.5" fill="none" stroke="#444" stroke-width=".9"/><path d="M3 6h1M5 4v4M7 4v4" stroke="#444" stroke-width=".9"/></svg>
<div class="a" style="left:391px;top:402px;width:26px;height:9px;background:#c6c6c6"></div>
<svg style="left:399px;top:405px" width="10" height="6" viewBox="0 0 10 6"><path d="M.5 0v6M9.5 0v6M3.5 0v6M6.5 0v6M0 .5h10M0 3.5h10" stroke="#555" stroke-width=".9"/></svg>
<svg style="left:426px;top:405px" width="9" height="6" viewBox="0 0 9 6"><path d="M.5 0v6M8.5 0v6M0 .5h9M2.5 2.5h4v4h-4z" fill="none" stroke="#666" stroke-width=".9"/></svg>
<svg style="left:453px;top:404px" width="10" height="7" viewBox="0 0 10 7"><path d="M.5 7V.5h9V7M4.5 .5v3.5M.5 4h4" fill="none" stroke="#666" stroke-width=".9"/></svg>
<div class="a" style="left:476px;top:407px;width:6px;height:1px;background:#555"></div>
<div class="a" style="left:484px;top:407px;width:67px;height:1px;background:#999"></div>
<div class="a" style="left:518px;top:405px;width:3px;height:6px;background:#444"></div>
<div class="a" style="left:554px;top:407px;width:6px;height:1px;background:#555"></div>
<div class="a" style="left:556.5px;top:404.5px;width:1px;height:6px;background:#555"></div>
<div class="a" style="left:0;top:0;width:1px;height:411px;background:#5a9c72"></div>
<!-- quick analysis -->
<div class="a" style="left:317px;top:301px;width:17px;height:17px;background:#fff;border:1px solid #b9dcc4"></div>
<svg style="left:320px;top:304px" width="11" height="10" viewBox="0 0 11 10"><path d="M3 0L.5 5h2L1.5 9" fill="none" stroke="#f7d9a0" stroke-width="1"/><path d="M3.5 1.5h7v8h-7z" fill="#fafafa" stroke="#b5b5b5" stroke-width=".8"/><path d="M5 3.5h2" stroke="#f08a7a" stroke-width="1"/><path d="M4.5 5.5h5" stroke="#7aa7d8" stroke-width="1"/><path d="M4.5 7.5h4" stroke="#8cc49c" stroke-width="1"/></svg>
<!-- tooltip -->
<div class="a" style="left:501px;top:269px;width:42px;height:15px;background:#fff;border:1px solid #c8c8c8"></div>

<div class="t" style="left:76.84px;top:387.27px;font-size:8.3px;color:#444;letter-spacing:0.205px">Données recevable</div>
<div class="t" style="left:168.96px;top:386.47px;font-size:8.3px;color:#217346;letter-spacing:0.202px;font-weight:bold">Feuil1</div>
<div class="t" style="left:210.59px;top:386.47px;font-size:8.3px;color:#444;letter-spacing:0.192px">Feuil2</div>
<div class="t" style="left:157.64px;top:405.06px;font-size:8.2px;color:#444;letter-spacing:-0.384px">Moyenne : 34371.66667</div>
<div class="t" style="left:248.64px;top:405.06px;font-size:8.2px;color:#444;letter-spacing:-0.279px">Nb (non vides) : 27</div>
<div class="t" style="left:323.63px;top:405.06px;font-size:8.2px;color:#444;letter-spacing:-0.542px">Somme : 309345</div>
<div class="t" style="left:567.38px;top:405.06px;font-size:8.2px;color:#444;letter-spacing:-0.433px">112 %</div>
<div class="t c1" style="left:507.14px;top:274.27px;font-size:7px;color:#333;letter-spacing:0.501px">E6:G14</div>
<svg style="left:0;top:0" width="600" height="411" viewBox="0 0 600 411"><path d="M200.70 302.50L210.16 325.61A10 10 0 1 1 191.59 325.75Z" fill="#ff0000"/></svg>
<div class="t c1" style="left:198.10px;top:322.34px;font-size:12px;color:#fff">1</div>
<svg style="left:0;top:0" width="600" height="411" viewBox="0 0 600 411"><path d="M315.50 201.30L293.24 210.27A10 10 0 1 1 293.45 191.81Z" fill="#ff0000"/></svg>
<div class="t c1" style="left:286.40px;top:194.84px;font-size:12px;color:#fff">2</div>
<svg style="left:0;top:0" width="600" height="411" viewBox="0 0 600 411"><path d="M495.50 314.00L517.19 305.06A10 10 0 1 1 516.97 323.45Z" fill="#ff0000"/></svg>
<div class="t c1" style="left:517.52px;top:308.34px;font-size:12px;color:#fff">3</div>
<svg style="left:0;top:0" width="600" height="411" viewBox="0 0 600 411"><path d="M434.50 370.00L444.01 391.23A10.2 10.2 0 1 1 425.33 391.38Z" fill="#ff0000"/></svg>
<div class="t c1" style="left:432.00px;top:389.14px;font-size:12px;color:#fff">A</div>
<svg style="left:0;top:0" width="600" height="411" viewBox="0 0 600 411"><path d="M547.70 274.20L570.59 264.59A10.1 10.1 0 1 1 570.80 283.30Z" fill="#ff0000"/></svg>
<div class="t c1" style="left:570.04px;top:267.84px;font-size:12px;color:#fff">B</div>
</body></html>
